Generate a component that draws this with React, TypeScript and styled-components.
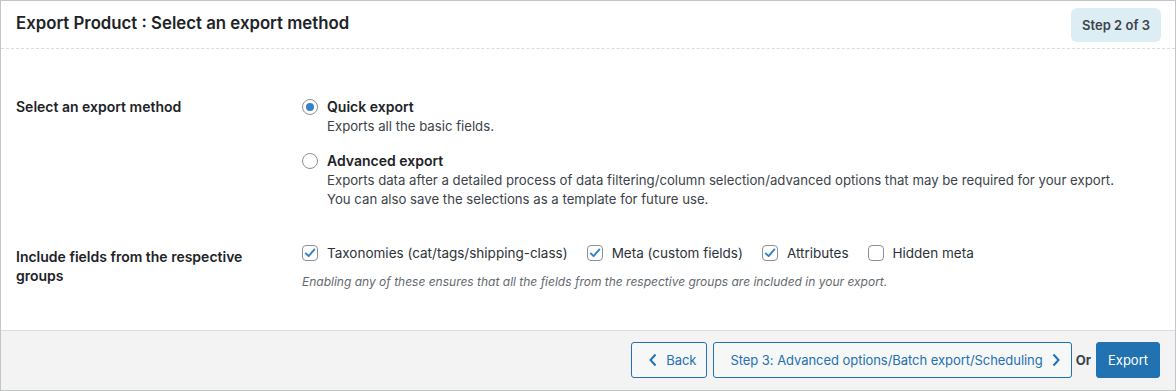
import styled, { createGlobalStyle } from "styled-components";

const GlobalStyle = createGlobalStyle`
  html, body {
    margin: 0;
    padding: 0;
    background: #ffffff;
  }
  body {
    font-family: Inter, "Noto Sans", "Liberation Sans", sans-serif;
    color: #2c3338;
    font-size: 13px;
  }
`;

const Panel = styled.div`
  width: 1176px;
  height: 391px;
  box-sizing: border-box;
  border: 1px solid #c3c4c7;
  background: #ffffff;
  display: flex;
  flex-direction: column;
`;

const Header = styled.div`
  height: 47px;
  display: flex;
  align-items: center;
  justify-content: space-between;
  padding: 0 14px 0 15px;
  border-bottom: 1px dashed #dcdcde;
`;

const Title = styled.h2`
  margin: 0 0 4px;
  font-size: 16.8px;
  font-weight: 600;
  color: #1d2327;
`;

const StepBadge = styled.div`
  background: #dcedf3;
  color: #3c434a;
  border-radius: 6px;
  padding: 0 11px;
  height: 34px;
  display: flex;
  align-items: center;
  font-size: 13px;
  font-weight: 600;
`;

const Body = styled.div`
  flex: 1;
  padding: 48px 15px 0;
  display: flex;
  flex-direction: column;
  gap: 37px;
`;

const Row = styled.div`
  display: flex;
`;

const Label = styled.div`
  width: 286px;
  padding-right: 40px;
  box-sizing: border-box;
  font-size: 14px;
  font-weight: 600;
  line-height: 19px;
  color: #1d2327;
`;

const Field = styled.div`
  flex: 1;
  display: flex;
  flex-direction: column;
`;

const RadioOption = styled.label`
  display: flex;
  gap: 9px;
  & + & {
    margin-top: 15px;
  }
`;

const Radio = styled.span<{ $checked?: boolean }>`
  width: 16px;
  height: 16px;
  box-sizing: border-box;
  border-radius: 50%;
  border: 1px solid #8c8f94;
  margin-top: 2px;
  flex-shrink: 0;
  display: flex;
  align-items: center;
  justify-content: center;
  &::after {
    content: "";
    width: 8px;
    height: 8px;
    border-radius: 50%;
    background: #3582c4;
    display: ${({ $checked }) => ($checked ? "block" : "none")};
  }
`;

const OptionText = styled.div`
  line-height: 19.5px;
`;

const OptionTitle = styled.div`
  font-size: 14px;
  font-weight: 600;
  color: #1d2327;
`;

const OptionDesc = styled.div`
  font-size: 13.2px;
  color: #3c434a;
`;

const CheckRow = styled.div`
  display: flex;
  align-items: center;
  gap: 19px;
  margin-top: -4px;
`;

const CheckItem = styled.label`
  display: flex;
  align-items: center;
  gap: 9px;
  color: #2c3338;
  font-size: 13.5px;
  line-height: 20px;
`;

const Box = styled.span`
  width: 16px;
  height: 16px;
  box-sizing: border-box;
  border: 1px solid #8c8f94;
  border-radius: 4px;
  display: flex;
  align-items: center;
  justify-content: center;
  background: #fff;
`;

const Help = styled.p`
  margin: 11px 0 0;
  font-size: 12px;
  font-style: italic;
  color: #646970;
`;

const Footer = styled.div`
  height: 58px;
  background: #f3f3f3;
  border-top: 1px solid #dcdcde;
  display: flex;
  align-items: center;
  justify-content: flex-end;
  padding: 0 15px 1px;
  gap: 6px;
`;

const OutlineButton = styled.button`
  height: 36px;
  box-sizing: border-box;
  border: 1px solid #2271b1;
  border-radius: 3px;
  background: #f6f7f7;
  color: #2271b1;
  font-family: inherit;
  font-size: 13px;
  letter-spacing: -0.05px;
  display: flex;
  align-items: center;
  gap: 8px;
  padding: 0 10px 0 16px;
  cursor: pointer;
`;

const Or = styled.span`
  font-weight: 700;
  color: #3c434a;
  font-size: 13px;
  margin: 0 -1px 0 -2px;
`;

const PrimaryButton = styled.button`
  height: 36px;
  border: 1px solid #2271b1;
  border-radius: 3px;
  background: #2271b1;
  color: #fff;
  font-family: inherit;
  font-size: 13px;
  padding: 0 11px;
  cursor: pointer;
`;

const Tick = () => (
  <svg width="12" height="12" viewBox="0 0 12 12">
    <path
      d="M1.8 6.4 L4.6 9.2 L10.4 2.4"
      fill="none"
      stroke="#3582c4"
      strokeWidth="1.9"
      strokeLinecap="round"
      strokeLinejoin="round"
    />
  </svg>
);

const Chevron = ({ left }: { left?: boolean }) => (
  <svg width="10" height="14" viewBox="0 0 10 14">
    <path
      d={left ? "M7.5 1.5 L2.5 7 L7.5 12.5" : "M2.5 1.5 L7.5 7 L2.5 12.5"}
      fill="none"
      stroke="#2271b1"
      strokeWidth="2"
    />
  </svg>
);

const checks = [
  { label: "Taxonomies (cat/tags/shipping-class)", on: true },
  { label: "Meta (custom fields)", on: true },
  { label: "Attributes", on: true },
  { label: "Hidden meta", on: false }
];

export default function App() {
  return (
    <>
      <GlobalStyle />
      <Panel>
        <Header>
          <Title>Export Product : Select an export method</Title>
          <StepBadge>Step 2 of 3</StepBadge>
        </Header>
        <Body>
          <Row>
            <Label>Select an export method</Label>
            <Field>
              <RadioOption>
                <Radio $checked />
                <OptionText>
                  <OptionTitle>Quick export</OptionTitle>
                  <OptionDesc>Exports all the basic fields.</OptionDesc>
                </OptionText>
              </RadioOption>
              <RadioOption>
                <Radio />
                <OptionText>
                  <OptionTitle>Advanced export</OptionTitle>
                  <OptionDesc>
                    Exports data after a detailed process of data filtering/column
                    selection/advanced options that may be required for your
                    export.
                    <br />
                    You can also save the selections as a template for future use.
                  </OptionDesc>
                </OptionText>
              </RadioOption>
            </Field>
          </Row>
          <Row>
            <Label>Include fields from the respective groups</Label>
            <Field>
              <CheckRow>
                {checks.map((c) => (
                  <CheckItem key={c.label}>
                    <Box>{c.on && <Tick />}</Box>
                    {c.label}
                  </CheckItem>
                ))}
              </CheckRow>
              <Help>
                Enabling any of these ensures that all the fields from the
                respective groups are included in your export.
              </Help>
            </Field>
          </Row>
        </Body>
        <Footer>
          <OutlineButton>
            <Chevron left />
            Back
          </OutlineButton>
          <OutlineButton>
            Step 3: Advanced options/Batch export/Scheduling
            <Chevron />
          </OutlineButton>
          <Or>Or</Or>
          <PrimaryButton>Export</PrimaryButton>
        </Footer>
      </Panel>
    </>
  );
}
